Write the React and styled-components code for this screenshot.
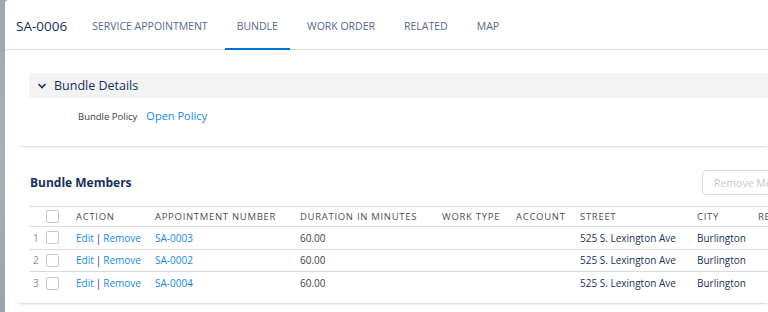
import styled, { createGlobalStyle } from 'styled-components'

const GlobalStyle = createGlobalStyle`
  html, body {
    margin: 0;
    padding: 0;
    background: #a1aab3;
  }
  body {
    font-family: "Open Sans", "Noto Sans", sans-serif;
    color: #16325c;
    overflow: hidden;
  }
`;

const tabs = ['SERVICE APPOINTMENT', 'BUNDLE', 'WORK ORDER', 'RELATED', 'MAP'];

const columns = [
  { label: 'ACTION', width: 79 },
  { label: 'APPOINTMENT NUMBER', width: 145 },
  { label: 'DURATION IN MINUTES', width: 142 },
  { label: 'WORK TYPE', width: 74 },
  { label: 'ACCOUNT', width: 64 },
  { label: 'STREET', width: 117 },
  { label: 'CITY', width: 61 },
  { label: 'REGION', width: 100 },
];

const members = [
  { id: 'SA-0003', duration: '60.00', street: '525 S. Lexington Ave', city: 'Burlington' },
  { id: 'SA-0002', duration: '60.00', street: '525 S. Lexington Ave', city: 'Burlington' },
  { id: 'SA-0004', duration: '60.00', street: '525 S. Lexington Ave', city: 'Burlington' },
];

const gridCols = `15px 22px ${columns.map(c => c.width + 'px').join(' ')}`;

const App = () => {
  return (
    <>
      <GlobalStyle />
      <Page>
        <Backdrop />
        <Panel>
          <TabBar>
            <RecordName>SA-0006</RecordName>
            {tabs.map(t => (
              <Tab key={t} $active={t === 'BUNDLE'}>{t}</Tab>
            ))}
          </TabBar>
          <Body>
            <Card $height={86}>
              <SectionHeader>
                <svg width="10" height="10" viewBox="0 0 10 10">
                  <path d="M1.5 3 L5 6.5 L8.5 3" fill="none" stroke="#16325c" strokeWidth="1.6" />
                </svg>
                <span>Bundle Details</span>
              </SectionHeader>
              <Field>
                <FieldLabel>Bundle Policy</FieldLabel>
                <Link $size={11}>Open Policy</Link>
              </Field>
            </Card>
            <Card $height={148} $pad={15}>
              <CardHead>
                <CardTitle>Bundle Members</CardTitle>
                <GhostButton disabled>Remove Members</GhostButton>
              </CardHead>
              <Table>
                <HeadRow>
                  <Cell />
                  <CheckCell><Check /></CheckCell>
                  {columns.map(c => (
                    <HeadCell key={c.label}>{c.label}</HeadCell>
                  ))}
                </HeadRow>
                {members.map((m, i) => (
                  <Row key={m.id} $last={i === members.length - 1}>
                    <Num>{i + 1}</Num>
                    <CheckCell><Check /></CheckCell>
                    <Cell>
                      <Link>Edit</Link><Sep>|</Sep><Link>Remove</Link>
                    </Cell>
                    <Cell><Link>{m.id}</Link></Cell>
                    <Cell $plain>{m.duration}</Cell>
                    <Cell />
                    <Cell />
                    <Cell>{m.street}</Cell>
                    <Cell>{m.city}</Cell>
                    <Cell />
                  </Row>
                ))}
              </Table>
            </Card>
          </Body>
        </Panel>
      </Page>
    </>
  )
};

const Page = styled.div`
  display: flex;
  width: 768px;
  height: 312px;
  overflow: hidden;
`;

const Backdrop = styled.div`
  width: 5px;
  flex-shrink: 0;
  background: linear-gradient(180deg, #9ea7ae 0%, #a6b0b6 50%, #9aa3ad 100%);
`;

const Panel = styled.div`
  flex: 1;
  min-width: 0;
  background: #fff;
  border-top-left-radius: 4px;
  display: flex;
  flex-direction: column;
`;

const TabBar = styled.div`
  height: 50px;
  flex-shrink: 0;
  display: flex;
  align-items: stretch;
  padding-left: 11px;
  border-bottom: 1px solid #d8dde6;
  box-sizing: border-box;
`;

const RecordName = styled.div`
  display: flex;
  align-items: center;
  font-size: 13.5px;
  color: #16325c;
  padding-top: 3px;
  margin-right: 13px;
`;

const Tab = styled.div`
  display: flex;
  align-items: center;
  padding: 3px 12px 0;
  margin-right: 5px;
  font-size: 10.5px;
  color: #54698d;
  position: relative;
  white-space: nowrap;
  ${p => p.$active && `
    &:after {
      content: "";
      position: absolute;
      left: 0;
      right: 0;
      bottom: -1px;
      height: 2px;
      background: #0070d2;
    }
  `}
`;

const Body = styled.div`
  flex: 1;
  padding: 10px 0 0 12px;
  display: flex;
  flex-direction: column;
  gap: 9px;
`;

const Card = styled.div`
  flex-shrink: 0;
  background: #fff;
  border-radius: 4px 0 0 4px;
  box-shadow: 0 2px 2px -1px rgba(0, 0, 0, 0.16);
  padding: ${p => p.$pad || 12}px 0 0 12px;
  height: ${p => p.$height}px;
  box-sizing: border-box;
  overflow: hidden;
`;

const SectionHeader = styled.div`
  height: 25px;
  margin-top: 1px;
  background: #f3f3f3;
  display: flex;
  align-items: center;
  gap: 7px;
  padding-left: 8px;
  font-size: 12.5px;
  color: #16325c;
`;

const Field = styled.div`
  display: flex;
  align-items: baseline;
  gap: 9px;
  padding: 10px 0 0 49px;
`;

const FieldLabel = styled.span`
  font-size: 9.5px;
  color: #3e3e3c;
`;

const Link = styled.span`
  color: #1589ee;
  font-size: ${p => p.$size || 10}px;
`;

const CardHead = styled.div`
  display: flex;
  align-items: center;
  justify-content: space-between;
  height: 25px;
  margin-bottom: 11px;
`;

const CardTitle = styled.h2`
  margin: 0;
  font-size: 12px;
  font-weight: 700;
  color: #16325c;
  padding-left: 1px;
`;

const GhostButton = styled.button`
  width: 112px;
  height: 25px;
  padding: 0 11px;
  margin-right: -46px;
  border: 1px solid #d8dde6;
  border-radius: 4px;
  background: #fff;
  color: #c9c7c5;
  font-family: inherit;
  font-size: 10.5px;
  text-align: left;
  white-space: nowrap;
`;

const Table = styled.div`
  display: flex;
  flex-direction: column;
  width: 819px;
`;

const HeadRow = styled.div`
  display: grid;
  grid-template-columns: ${gridCols};
  height: 21px;
  align-items: center;
  border-top: 1px solid #dddbda;
  border-bottom: 1px solid #dddbda;
  box-sizing: border-box;
`;

const Row = styled.div`
  display: grid;
  grid-template-columns: ${gridCols};
  height: 22.5px;
  align-items: center;
  border-bottom: ${p => p.$last ? 'none' : '1px solid #dddbda'};
  box-sizing: border-box;
`;

const Cell = styled.div`
  padding-left: 10px;
  font-size: 10px;
  color: ${p => p.$plain ? '#3e3e3c' : '#16325c'};
  white-space: nowrap;
  overflow: hidden;
`;

const HeadCell = styled(Cell)`
  font-size: 9.5px;
  letter-spacing: 0.7px;
  color: #514f4d;
`;

const Num = styled.div`
  padding-left: 4px;
  font-size: 10px;
  color: #8390a6;
`;

const CheckCell = styled.div`
  display: flex;
  align-items: center;
  padding-left: 2px;
`;

const Check = styled.span`
  width: 13px;
  height: 13px;
  box-sizing: border-box;
  border: 1px solid #c9c9c9;
  border-radius: 2px;
  background: #fff;
`;

const Sep = styled.span`
  color: #16325c;
  font-size: 10px;
  margin: 0 2px;
`;

export default App;
